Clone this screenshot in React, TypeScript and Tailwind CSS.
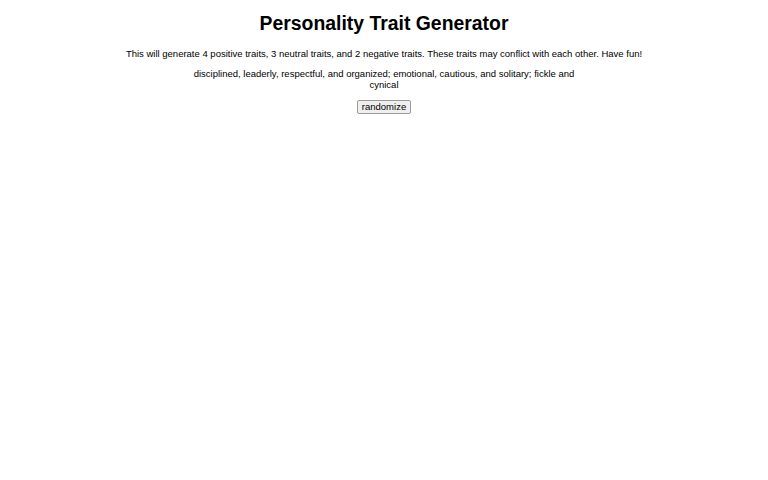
export default function App() {
  return (
    <div className="min-h-screen bg-white text-black text-center" style={{ fontFamily: '"Liberation Sans", Arial, sans-serif' }}>
      <h1 className="pt-[12px] text-[19.4px] font-bold leading-[23px]">Personality Trait Generator</h1>
      <p className="mt-[13px] text-[9.5px] leading-[12px]">
        This will generate 4 positive traits, 3 neutral traits, and 2 negative traits. These traits may conflict with each other. Have fun!
      </p>
      <p className="mx-auto mt-[8px] w-[50%] text-[9.5px] leading-[11px]">
        disciplined, leaderly, respectful, and organized; emotional, cautious, and solitary; fickle and cynical
      </p>
      <div className="mt-[3px]">
        <button className="border border-[#999] bg-[#efefef] px-[4px] text-[9.5px] leading-[12px] rounded-[2px]">randomize</button>
      </div>
    </div>
  );
}
